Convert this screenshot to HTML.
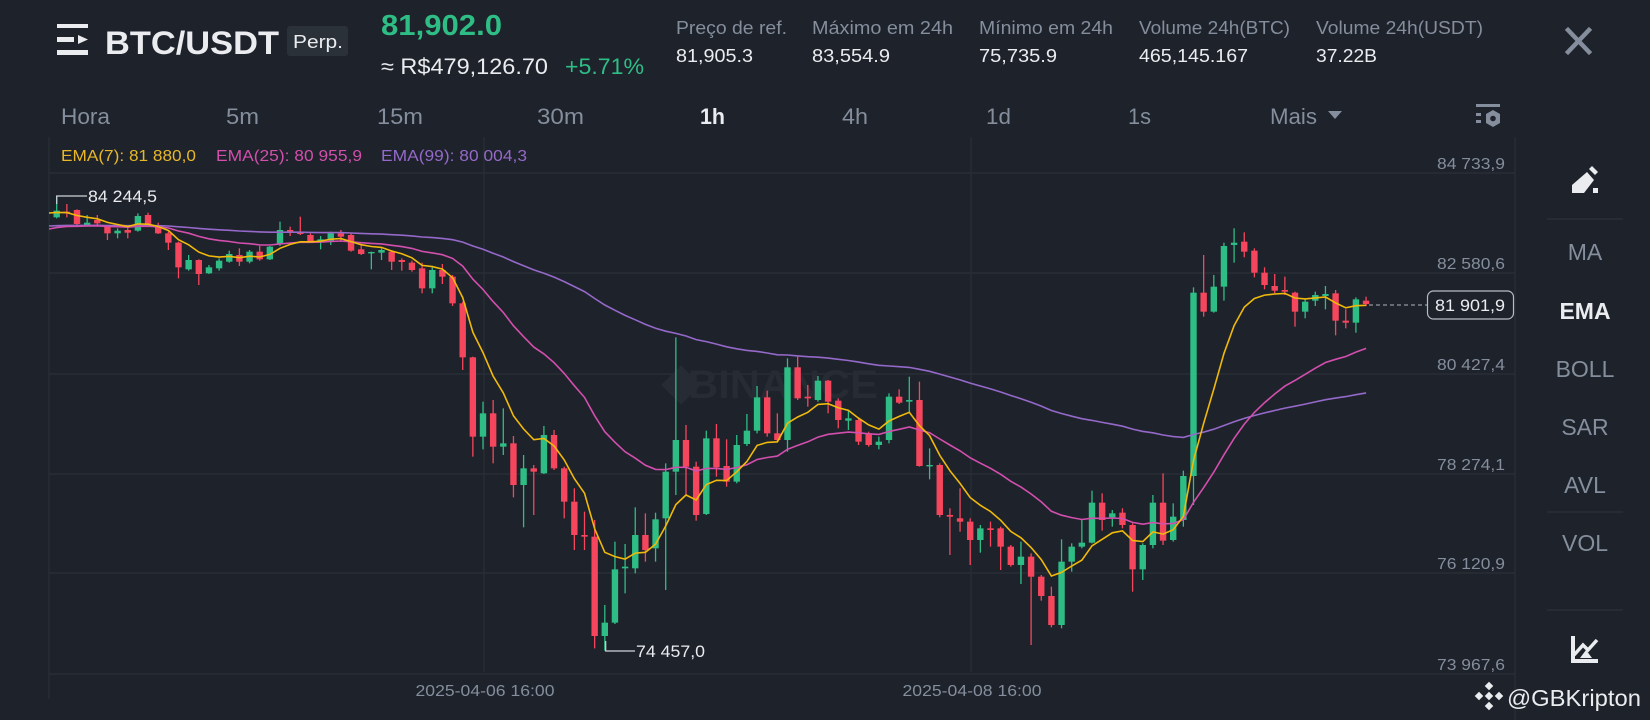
<!DOCTYPE html>
<html><head><meta charset="utf-8">
<style>
html,body{margin:0;padding:0;background:#1e222b;overflow:hidden}
svg{display:block}
text{font-family:"Liberation Sans Narrow","Liberation Sans",sans-serif}
</style></head><body>
<svg id="s" width="1650" height="720" viewBox="0 0 1650 720" xmlns="http://www.w3.org/2000/svg">
<rect width="1650" height="720" fill="#1e222b"/>
<!-- header -->
<g fill="#eaecef">
<rect x="57" y="24" width="31" height="4"/>
<rect x="57" y="37" width="17" height="5"/>
<polygon points="78,35 88,39.5 78,44"/>
<rect x="57" y="50" width="31" height="5"/>
</g>
<text x="105" y="54" font-size="32" font-weight="bold" fill="#eaecef" textLength="174" lengthAdjust="spacingAndGlyphs">BTC/USDT</text>
<rect x="287" y="26" width="61" height="30" rx="3" fill="#2b3139"/>
<text x="293" y="48" font-size="18" fill="#eaecef" textLength="50" lengthAdjust="spacingAndGlyphs">Perp.</text>
<text x="381" y="35" font-size="29" font-weight="bold" fill="#2ebd85" textLength="121" lengthAdjust="spacingAndGlyphs">81,902.0</text>
<text x="381" y="74" font-size="22" fill="#eaecef" textLength="167" lengthAdjust="spacingAndGlyphs">≈ R$479,126.70</text>
<text x="565" y="74" font-size="22" fill="#2ebd85" textLength="79" lengthAdjust="spacingAndGlyphs">+5.71%</text>
<g font-size="18" fill="#848e9c">
<text x="676" y="34" textLength="111" lengthAdjust="spacingAndGlyphs">Preço de ref.</text>
<text x="812" y="34" textLength="141" lengthAdjust="spacingAndGlyphs">Máximo em 24h</text>
<text x="979" y="34" textLength="134" lengthAdjust="spacingAndGlyphs">Mínimo em 24h</text>
<text x="1139" y="34" textLength="151" lengthAdjust="spacingAndGlyphs">Volume 24h(BTC)</text>
<text x="1316" y="34" textLength="167" lengthAdjust="spacingAndGlyphs">Volume 24h(USDT)</text>
</g>
<g font-size="18" fill="#eaecef">
<text x="676" y="62" textLength="77" lengthAdjust="spacingAndGlyphs">81,905.3</text>
<text x="812" y="62" textLength="78" lengthAdjust="spacingAndGlyphs">83,554.9</text>
<text x="979" y="62" textLength="78" lengthAdjust="spacingAndGlyphs">75,735.9</text>
<text x="1139" y="62" textLength="109" lengthAdjust="spacingAndGlyphs">465,145.167</text>
<text x="1316" y="62" textLength="61" lengthAdjust="spacingAndGlyphs">37.22B</text>
</g>
<path d="M1568 30 L1589 52 M1589 30 L1568 52" stroke="#848e9c" stroke-width="4.5" stroke-linecap="square"/>
<!-- timeframe row -->
<g font-size="22" fill="#848e9c">
<text x="61" y="124" textLength="49" lengthAdjust="spacingAndGlyphs">Hora</text>
<text x="226" y="124" textLength="33" lengthAdjust="spacingAndGlyphs">5m</text>
<text x="377" y="124" textLength="46" lengthAdjust="spacingAndGlyphs">15m</text>
<text x="537" y="124" textLength="47" lengthAdjust="spacingAndGlyphs">30m</text>
<text x="700" y="124" fill="#eaecef" font-weight="bold" textLength="25" lengthAdjust="spacingAndGlyphs">1h</text>
<text x="842" y="124" textLength="26" lengthAdjust="spacingAndGlyphs">4h</text>
<text x="986" y="124" textLength="25" lengthAdjust="spacingAndGlyphs">1d</text>
<text x="1128" y="124" textLength="23" lengthAdjust="spacingAndGlyphs">1s</text>
<text x="1270" y="124" textLength="47" lengthAdjust="spacingAndGlyphs">Mais</text>
</g>
<polygon points="1328,111 1342,111 1335,119" fill="#848e9c"/>
<g fill="#848e9c">
<rect x="1476" y="104" width="24" height="3"/>
<rect x="1476" y="113" width="5" height="3"/>
<rect x="1476" y="120" width="5" height="3"/>
<polygon points="1493,110 1500,114 1500,123 1493,127 1486,123 1486,114"/>
<circle cx="1493" cy="118.5" r="2.8" fill="#1e222b"/>
</g>
<!-- chart grid -->
<g stroke="#2a2f38" stroke-width="1.2">
<line x1="49" y1="137" x2="49" y2="699"/>
<line x1="484" y1="137" x2="484" y2="672"/>
<line x1="971" y1="137" x2="971" y2="672"/>
<line x1="1515" y1="137" x2="1515" y2="720"/>
<line x1="49" y1="173" x2="1515" y2="173"/>
<line x1="49" y1="273" x2="1515" y2="273"/>
<line x1="49" y1="374" x2="1515" y2="374"/>
<line x1="49" y1="474" x2="1515" y2="474"/>
<line x1="49" y1="573" x2="1515" y2="573"/>
<line x1="49" y1="674" x2="1515" y2="674"/>
</g>
<text x="783" y="398" font-size="40" font-weight="bold" fill="#262b34" text-anchor="middle" font-family="Liberation Sans, sans-serif" textLength="190" lengthAdjust="spacingAndGlyphs">BINANCE</text>
<g transform="translate(681,385)" fill="#262b34"><rect x="-14" y="-14" width="28" height="28" transform="rotate(45)"/></g>
<g font-size="16">
<text x="61" y="161" fill="#e8b829" textLength="135" lengthAdjust="spacingAndGlyphs">EMA(7): 81 880,0</text>
<text x="216" y="161" fill="#d34fae" textLength="146" lengthAdjust="spacingAndGlyphs">EMA(25): 80 955,9</text>
<text x="381" y="161" fill="#9469c9" textLength="146" lengthAdjust="spacingAndGlyphs">EMA(99): 80 004,3</text>
</g>
<g font-size="16" fill="#848e9c" text-anchor="end">
<text x="1505" y="169" textLength="68" lengthAdjust="spacingAndGlyphs">84 733,9</text>
<text x="1505" y="269" textLength="68" lengthAdjust="spacingAndGlyphs">82 580,6</text>
<text x="1505" y="370" textLength="68" lengthAdjust="spacingAndGlyphs">80 427,4</text>
<text x="1505" y="470" textLength="68" lengthAdjust="spacingAndGlyphs">78 274,1</text>
<text x="1505" y="569" textLength="68" lengthAdjust="spacingAndGlyphs">76 120,9</text>
<text x="1505" y="670" textLength="68" lengthAdjust="spacingAndGlyphs">73 967,6</text>
</g>
<g font-size="16" fill="#848e9c" text-anchor="middle">
<text x="485" y="696" textLength="139" lengthAdjust="spacingAndGlyphs">2025-04-06 16:00</text>
<text x="972" y="696" textLength="139" lengthAdjust="spacingAndGlyphs">2025-04-08 16:00</text>
</g>
<g id="candles"></g>
<g id="emas" fill="none" stroke-width="1.6"></g>
<!-- markers -->
<path d="M56.7 204 V196 H87" stroke="#cfd3d8" stroke-width="1.2" fill="none"/>
<text x="88" y="202" font-size="17" fill="#eaecef" textLength="69" lengthAdjust="spacingAndGlyphs">84 244,5</text>
<path d="M605.7 641 V651 H635" stroke="#cfd3d8" stroke-width="1.2" fill="none"/>
<text x="636" y="657" font-size="17" fill="#eaecef" textLength="69" lengthAdjust="spacingAndGlyphs">74 457,0</text>
<line x1="1369" y1="305" x2="1427" y2="305" stroke="#b0b4ba" stroke-width="1" stroke-dasharray="4,3"/>
<rect x="1427.5" y="291" width="86" height="28" rx="6" fill="#1e222b" stroke="#b7bcc3" stroke-width="1.2"/>
<text x="1470" y="311" font-size="17" fill="#eaecef" text-anchor="middle" textLength="70" lengthAdjust="spacingAndGlyphs">81 901,9</text>
<!-- side panel -->
<g fill="#eaecef">
<polygon points="1572,193 1572,185 1587,172 1594,180 1584,193"/>
<polygon points="1589,169 1592,166 1598,172 1595,175"/>
<rect x="1593" y="188" width="5" height="5"/>
</g>
<g stroke="#2b3139" stroke-width="1.2">
<line x1="1547" y1="219" x2="1623" y2="219"/>
<line x1="1547" y1="512" x2="1623" y2="512"/>
<line x1="1547" y1="610" x2="1623" y2="610"/>
</g>
<g font-size="23" fill="#848e9c" text-anchor="middle" font-family="Liberation Sans, sans-serif">
<text x="1585" y="260">MA</text>
<text x="1585" y="319" fill="#eaecef" font-weight="bold">EMA</text>
<text x="1585" y="377">BOLL</text>
<text x="1585" y="435">SAR</text>
<text x="1585" y="493">AVL</text>
<text x="1585" y="551">VOL</text>
</g>
<g fill="#eaecef">
<rect x="1571" y="636" width="4" height="27"/>
<rect x="1571" y="659" width="27" height="4"/>
<path d="M1574 655 L1583 645 L1588 650 L1597 640" stroke="#eaecef" stroke-width="3.5" fill="none"/>
<polygon points="1580,658 1586,650 1592,658"/>
</g>
<g fill="#eaecef" transform="translate(1489,696)">
<rect x="-3" y="-3" width="6" height="6" transform="rotate(45)"/>
<rect x="-3" y="-13" width="6" height="6" transform="rotate(45 0 -10)"/>
<rect x="-3" y="7" width="6" height="6" transform="rotate(45 0 10)"/>
<rect x="-13" y="-3" width="6" height="6" transform="rotate(45 -10 0)"/>
<rect x="7" y="-3" width="6" height="6" transform="rotate(45 10 0)"/>
</g>
<text x="1507" y="706" font-size="23" fill="#eaecef" font-family="Liberation Sans, sans-serif" textLength="134" lengthAdjust="spacingAndGlyphs">@GBKripton</text>
</svg>
<script>
var D=[
[112,92,48,115],[95,100,72,112],[90,132,88,135],[135,128,105,140],[120,130,105,140],[140,160,135,180],[160,152,145,175],[150,158,140,175],[152,108,100,155],[105,135,98,140],
[135,160,128,162],[160,188,155,210],[188,262,185,295],[268,240,225,272],[240,282,238,315],[280,262,255,282],[265,242,235,272],[245,222,212,248],[225,245,205,258],[245,215,210,250],
[215,238,198,242],[238,200,198,240],[192,150,125,198],[150,158,140,168],[155,162,110,165],[165,185,160,188],[182,178,168,208],[182,160,155,195],[160,170,150,185],[165,212,160,215],
[208,222,195,225],[220,216,215,268],[218,210,205,240],[215,245,210,270],[240,246,235,272],[248,270,242,275],[265,325,248,340],[325,270,262,340],[270,290,252,312],[290,370,285,378],
[370,532,365,570],[532,770,530,830],[770,700,665,808],
[700,800,660,850],[800,790,685,825],[790,915,768,952],[915,865,825,1042],[865,875,855,1005],[880,765,738,882],[765,865,750,870],[865,965,860,1015],[965,1065,925,1110],[1065,1070,995,1110],
[1070,1368,1020,1405],[1368,1328,1275,1412],[1328,1168,1085,1332],[1165,1160,1092,1240],[1165,1065,982,1180],[1065,1110,1000,1145],[1105,1018,998,1145],[1015,875,850,1230],[875,780,472,945],[780,860,735,948],
[860,1005,845,1022],[1002,775,752,1005],[775,862,732,890],[858,905,778,920],[905,795,765,910],[792,752,702,798],[752,652,618,760],[652,760,632,770],[760,780,700,785],[780,562,535,815],
[562,655,530,660],[650,655,615,680],[660,602,588,665],[602,665,600,700],[662,720,655,745],[722,715,690,750],[720,785,712,795],[760,795,755,800],[795,785,770,808],[780,650,640,790],
[650,668,628,672],[665,660,590,700],[660,858,605,860],
[858,855,805,898],[855,1005,850,1012],[1005,1010,985,1125],[1015,1025,925,1055],[1025,1080,1015,1155],[1080,1045,1035,1118],[1045,1050,1025,1100],[1045,1100,1040,1170],[1100,1155,1095,1160],[1155,1130,1085,1212],
[1130,1190,1120,1395],[1190,1248,1185,1262],[1248,1335,1220,1342],[1335,1145,1078,1345],[1145,1100,1090,1175],[1100,1088,1018,1105],[1088,968,932,1090],[968,1020,940,1052],[1012,1000,990,1040],[998,1035,985,1045],
[1035,1168,1030,1235],[1168,1095,1090,1200],[1095,968,945,1105],[968,1082,880,1095],[1080,1010,970,1085],[1020,888,872,1040],[888,338,322,975],[338,395,225,410],[395,320,285,398],[320,198,188,362],
[195,188,145,248],[185,215,157,232],[212,278,205,292],[278,315,262,328],[318,332,282,340],[330,335,290,345],[338,395,335,440],[395,365,358,415],[362,345,335,378],[348,342,318,388],
[340,422,330,466],[422,428,388,445],[428,358,352,458],[362,372,350,378]];
var NS="http://www.w3.org/2000/svg",g=document.getElementById('candles'),h='';
function Y(z){return 180+z/3}
var closes=[];
for(var i=0;i<D.length;i++){var d=D[i],x=56.7+i*10.15,o=Y(d[0]),c=Y(d[1]),hi=Y(d[2]),lo=Y(d[3]);
var col=c<o?'#2ebd85':'#f6465d';if(Math.abs(c-o)<1.2&&i>0)col=c<=o?'#2ebd85':'#f6465d';
var t=Math.min(o,c),b=Math.max(Math.max(o,c)-t,1.4);
h+='<line x1="'+x+'" y1="'+hi+'" x2="'+x+'" y2="'+lo+'" stroke="'+col+'" stroke-width="1.3"/>';
h+='<rect x="'+(x-3.2)+'" y="'+t+'" width="6.4" height="'+b+'" fill="'+col+'"/>';
closes.push({x:x,c:c});}
g.innerHTML=h;
function ema(n,seed,col){var a=2/(n+1),e=seed,p='';for(var i=0;i<closes.length;i++){e=e+a*(closes[i].c-e);p+=(i?'L':'M')+closes[i].x.toFixed(1)+' '+e.toFixed(1);}return '<path d="M49 '+seed+' L'+p.slice(1)+'" stroke="'+col+'"/>';}
document.getElementById('emas').innerHTML=ema(99,226,'#9469c9')+ema(25,229,'#d34fae')+ema(7,213,'#f0b90b');
</script>
</body></html>
